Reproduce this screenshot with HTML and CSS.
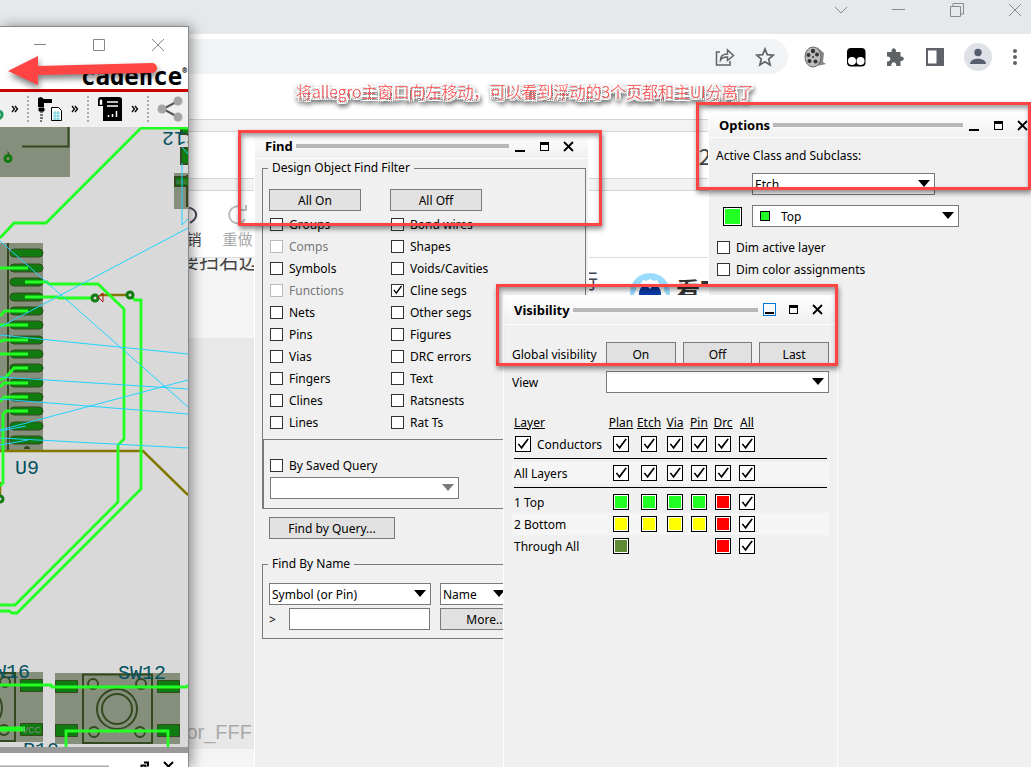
FILE: index.html
```html
<!DOCTYPE html>
<html lang="zh-CN">
<head>
    <meta charset="UTF-8">
    <meta name="viewport" content="width=device-width, initial-scale=1.0">
    <title>Allegro</title>
    <link rel="stylesheet" href="styles.css">
</head>
<body>
    <div class="desktop">
        <!-- browser behind everything -->
        <div class="browser">
            <div class="tab-strip">
                <svg width="14" height="14" viewBox="0 0 14 14"><path d="M1 4l6 6 6-6"/></svg>
                <svg width="14" height="14" viewBox="0 0 14 14"><path d="M0 6.500h13"/></svg>
                <svg width="14" height="14" viewBox="0 0 14 14"><path d="M.5 3.500h10v10H.5zM3 3V.5h10.500v10.500H11"/></svg>
                <svg width="14" height="14" viewBox="0 0 14 14"><path d="M1 1l12 12M13 1L1 13"/></svg>
            </div>
            <div class="address-row">
                <div class="address">
                    <svg width="20" height="20" viewBox="0 0 20 20" fill="none" stroke="#5f6368" stroke-width="1.5"><path d="M5 5H1.500v13H15v-4M5.500 13c0-4 3-6 7-6V3l6 5.500-6 5V10c-3 0-5.500.5-7 3z"/></svg>
                    <svg width="20" height="20" viewBox="0 0 20 20" fill="none" stroke="#5f6368" stroke-width="1.700"><path d="M10 2l2.300 5.600 6 .5-4.600 3.900 1.400 5.900-5.100-3.200-5.100 3.200 1.400-5.900L1.700 8.100l6-.5z"/></svg>
                </div>
                <div class="extensions">
                    <svg width="22" height="22" viewBox="0 0 22 22"><path d="M13 1l7 6-1 9 3 2-4 1-6 1z" fill="#888"/><ellipse cx="9" cy="11" rx="8" ry="10" fill="#bbb" stroke="#666"/><g fill="#333"><circle cx="9" cy="5" r="2.200"/><circle cx="4.500" cy="9" r="2"/><circle cx="13" cy="8.500" r="2"/><circle cx="5.500" cy="15" r="2"/><circle cx="11.500" cy="15.500" r="2"/><circle cx="9" cy="11" r="1"/></g></svg>
                    <svg width="20" height="20" viewBox="0 0 20 20"><rect x="1" y="1" width="18.500" height="18.500" rx="4"/><circle cx="6" cy="14" r="4" fill="#fff"/><circle cx="14.500" cy="14" r="4" fill="#fff"/></svg>
                    <svg width="20" height="20" viewBox="0 0 20 20"><path fill="#5f6368" d="M2 5h4.500C6 0 11.500 0 11 5h4.500v4.500c4.500-.5 4.500 5 0 4.500V19h-4.200c.2-5-5.300-5-5.100 0H2v-4.500c4.500.5 4.500-5.500 0-5z"/></svg>
                    <svg width="20" height="20" viewBox="0 0 20 20"><path fill="#5f6368" fill-rule="evenodd" d="M1 1h18v18H1zm2 2.500v13h8.500v-13z"/></svg>
                    <svg width="28" height="28" viewBox="0 0 28 28"><circle cx="14" cy="14" r="14" fill="#dee1e6"/><circle cx="14" cy="9.500" r="3.700" fill="#565e70"/><path d="M6 21c0-7 16-7 16 0z" fill="#565e70"/></svg>
                    <svg width="6" height="20" viewBox="0 0 6 20" fill="#5f6368"><circle cx="3" cy="4" r="2"/><circle cx="3" cy="10" r="2"/><circle cx="3" cy="16" r="2"/></svg>
                </div>
            </div>
            <div class="bookmarks"></div>
            <div class="band"></div>
            <div class="band-row"><span class="page-number">2</span></div>
            <div class="band"></div>
            <div class="ribbon">
                <div class="ribbon-item">
                    <svg width="22" height="22" viewBox="0 0 22 22" fill="none" stroke="#4b4b5a" stroke-width="2"><path d="M4 3v6h6M5 7c8-8 24 4 9 13"/></svg>
                    撤销
                </div>
                <div class="ribbon-item faded">
                    <svg width="22" height="22" viewBox="0 0 22 22" fill="none" stroke="#bbb" stroke-width="2"><path d="M14 4a8.500 8.500 0 1 0 4 12M19 2v5h-6"/></svg>
                    重做
                </div>
            </div>
            <div class="document">
                <div class="doc-left">
                    <p class="doc-heading">要扫右边</p>
                    <div class="doc-gray"><span>or_FFF</span></div>
                    <div class="doc-foot"></div>
                </div>
                <div class="doc-mid">
                    <span class="doc-char">行</span>
                    <svg width="42" height="42" viewBox="0 0 42 42"><circle cx="21" cy="21" r="20" fill="#9adcff"/><path d="M5 22q3-4 2-8 5-1 7-6 4 2 7-1 4 3 7 1 2 5 7 6-1 4 2 8v15H5z" fill="#fff"/><path d="M10 22c0-9 8-10 11-5 3-5 11-4 11 5 0 8-22 8-22 0z" fill="#0b3aa5"/></svg>
                    <span class="doc-title">看飞</span>
                </div>
            </div>
        </div>

        <!-- main allegro window -->
        <div class="main-window">
            <div class="main-title">
                <svg width="14" height="14" viewBox="0 0 14 14"><path d="M1 6.500h12"/></svg>
                <svg width="14" height="14" viewBox="0 0 14 14"><path d="M1.500 1.500h11v11h-11z"/></svg>
                <svg width="14" height="14" viewBox="0 0 14 14"><path d="M1 1l12 12M13 1L1 13"/></svg>
            </div>
            <div class="logo">cadence<sup>®</sup></div>
            <div class="main-toolbar">
                <svg width="188" height="34" viewBox="0 92 188 34">
                    <path d="M0 111c3 2 3 7-2 8" stroke="#1d9b5e" stroke-width="3" fill="none"/>
                    <path d="M28 96v26M88 96v26M148 96v26" stroke="#aaa" stroke-width="2" stroke-dasharray="2 2"/>
                    <path d="M12 106l2.500 3-2.500 3M15 106l2.500 3-2.500 3M72 106l2.500 3-2.500 3M75 106l2.500 3-2.500 3M132 106l2.500 3-2.500 3M135 106l2.500 3-2.500 3" fill="none" stroke="#000" stroke-width="1.300"/>
                    <path d="M38 98l3-1 3 2h8v4h-8v4h-6z"/>
                    <path d="M39 108h5v3h-5zM40 112h3M40 115h3M40 118h3M41 120v2" stroke="#000"/>
                    <path d="M51.500 107.500h7l3 3v10h-10z" fill="#fff" stroke="#000"/>
                    <path d="M53 113h7M53 116h7M53 119h7M55 111v9M58 111v9" stroke="#67cfd8"/>
                    <path d="M98 106v-6q0-3 3-3h18q3 0 3 3v21h-19v-15z"/>
                    <path d="M100.500 104v-3q.5-2 1 0v3zM107 102h11M107 106h11M108.500 117v-2M112.500 117v-3M116.500 117v-6" stroke="#fff" stroke-width="1.500" fill="#fff"/>
                    <path d="M178 101l-15 8 15 8" fill="none" stroke="#555" stroke-width="2"/>
                    <g fill="#a5a5a5"><circle cx="178" cy="101" r="4.500"/><circle cx="162" cy="109" r="4.500"/><circle cx="178" cy="117" r="4.500"/></g>
                </svg>
            </div>
            <svg class="board" viewBox="0 127 188 620" preserveAspectRatio="xMinYMin slice">
                <defs>
                    <g id="pad"><rect x="10" y="-4" width="33" height="8" rx="4" fill="#107c10" stroke="#33491f"/></g>
                </defs>
                <!-- component bodies -->
                <g fill="#868f7b">
                    <path d="M0 127h70v50H0zM0 243h43v209H0zM174 173h14v36h-14z"/>
                    <path d="M0 672h43v70H0zM55 673h125v71H55z"/>
                </g>
                <path d="M22 146.500h46.500V127M8 243v209M187 175v32" fill="none" stroke="#33491f" stroke-width="2"/>
                <circle cx="8" cy="158.500" r="3" fill="none" stroke="#107c10" stroke-width="3"/>
                <path d="M7 152q2-1 2 3" fill="none" stroke="#33491f"/>
                <use href="#pad" y="253"/><use href="#pad" y="268"/><use href="#pad" y="282"/><use href="#pad" y="297"/>
                <use href="#pad" y="311"/><use href="#pad" y="325"/><use href="#pad" y="340"/><use href="#pad" y="354"/>
                <use href="#pad" y="368"/><use href="#pad" y="383"/><use href="#pad" y="397"/><use href="#pad" y="411"/>
                <use href="#pad" y="426"/><use href="#pad" y="440"/>
                <path d="M24 449a3 3 0 0 1 6 0z" fill="#33491f"/>
                <g fill="#107c10" stroke="#33491f" stroke-width="2">
                    <rect x="181" y="124" width="12" height="10"/>
                    <rect x="181" y="148" width="12" height="16"/>
                    <rect x="175" y="177" width="16" height="9"/>
                </g>
                <text x="176" y="184" class="net">GND</text>
                <!-- switches -->
                <g fill="#107c10" stroke="#33491f">
                    <path d="M20.500 679.500h22v12h-22zM20.500 723.500h22v12h-22zM55.500 680.500h22v12h-22zM157.500 680.500h22v12h-22zM55.500 724.500h22v12h-22zM157.500 724.500h22v12h-22z"/>
                </g>
                <g fill="none" stroke="#33491f" stroke-width="2">
                    <path d="M83 674.500h69V743H83zM0 673h15v68H0"/>
                    <circle cx="117" cy="709" r="20"/><circle cx="117" cy="709" r="15"/><circle cx="-18" cy="708" r="20"/>
                    <circle cx="93" cy="684" r="5"/><circle cx="141" cy="684" r="5"/><circle cx="94" cy="732" r="5"/><circle cx="140" cy="732" r="5"/>
                    <circle cx="5" cy="682" r="5"/><circle cx="4" cy="730" r="5"/>
                </g>
                <path d="M0 451h143l45 44M100 295h28M0 482v16" fill="none" stroke="#827800" stroke-width="2.500"/>
                <!-- routed traces -->
                <g fill="none" stroke="#22ff22" stroke-width="2.800">
                    <path d="M188 128h-47l-95 95H14L0 238"/>
                    <path d="M0 268h28M25 282h22l2 2h49l26 25v130l-6 6v57L15 605H0"/>
                    <path d="M25 297h32l2 1h34M130 295l5 5h6v189L17 613h-5l-3-2H0"/>
                    <path d="M0 316l5-5h23M0 325h28M0 342l3-2h25M0 354h28M0 380l6-3 8-9h14M0 387l4-4h24M0 402l4-5h24M28 411H6l-3 3v69L0 486"/>
                    <path d="M0 685h51l1 2h134l2-2M66 747v-16h102v16"/>
                    <path d="M0 729h25" stroke-width="5"/>
                </g>
                <!-- ratsnest -->
                <g fill="none" stroke="#22d3ff">
                    <path d="M0 241l188 166M0 327l188-99M0 335l188 19M0 377l188 12M0 430l188-50M0 399l188 15M0 438l188 10M0 431l26-5M0 445l28-5M182 163v62l6-6M182 147l6 7"/>
                </g>
                <g fill="#d9d9d9" stroke="#107c10" stroke-width="3"><circle cx="95" cy="298" r="3"/><circle cx="130" cy="295" r="3"/><circle cx="0" cy="499" r="3"/></g>
                <path d="M103 293v9l-5-5z" fill="none" stroke="#b01010"/>
                <text x="15" y="474" class="refdes">U9</text>
                <text x="118" y="679" class="refdes">SW12</text>
                <text x="-18" y="678" class="refdes">SW16</text>
                <text x="23" y="756" class="refdes">R10</text>
                <text x="174" y="146" class="refdes" transform="rotate(180 186 139)">C12</text>
                <text x="22" y="733" class="net-large">VCC</text>
            </svg>
            <div class="dock-title">
                <svg width="188" height="14" viewBox="0 753 188 14"><path d="M0 766.500h109" stroke="#aaa" stroke-width="2"/><path d="M144 762.500h4v4M141.500 765.500h4v3h-4z" fill="none" stroke="#000" stroke-width="2"/><path d="M164 762l9 9M173 762l-9 9" stroke="#000" stroke-width="2"/></svg>
            </div>
        </div>

        <!-- Find -->
        <section class="panel find">
            <header class="panel-title">
                <h2>Find</h2><i class="grip"></i>
                <button type="button" aria-label="Minimize"><svg width="11" height="11" viewBox="0 0 11 11"><path d="M0 9h10v2H0z"/></svg></button>
                <button type="button" aria-label="Maximize"><svg width="11" height="11" viewBox="0 0 11 11"><path fill-rule="evenodd" d="M1 1h9v9H1zm1 3v5h7V4z"/></svg></button>
                <button type="button" aria-label="Close"><svg width="11" height="11" viewBox="0 0 11 11"><path d="M1 1l9 9M10 1L1 10" stroke="#000" stroke-width="1.800"/></svg></button>
            </header>
            <fieldset class="filter">
                <legend>Design Object Find Filter</legend>
                <div class="filter-grid">
                    <button type="button" class="btn">All On</button>
                    <button type="button" class="btn">All Off</button>
                    <label><input type="checkbox">Groups</label>
                    <label><input type="checkbox">Bond wires</label>
                    <label><input type="checkbox" disabled>Comps</label>
                    <label><input type="checkbox">Shapes</label>
                    <label><input type="checkbox">Symbols</label>
                    <label><input type="checkbox">Voids/Cavities</label>
                    <label><input type="checkbox" disabled>Functions</label>
                    <label><input type="checkbox" checked>Cline segs</label>
                    <label><input type="checkbox">Nets</label>
                    <label><input type="checkbox">Other segs</label>
                    <label><input type="checkbox">Pins</label>
                    <label><input type="checkbox">Figures</label>
                    <label><input type="checkbox">Vias</label>
                    <label><input type="checkbox">DRC errors</label>
                    <label><input type="checkbox">Fingers</label>
                    <label><input type="checkbox">Text</label>
                    <label><input type="checkbox">Clines</label>
                    <label><input type="checkbox">Ratsnests</label>
                    <label><input type="checkbox">Lines</label>
                    <label><input type="checkbox">Rat Ts</label>
                </div>
                <div class="saved-query">
                    <label><input type="checkbox">By Saved Query</label>
                    <div class="select off"><select aria-label="Saved query" disabled><option></option></select></div>
                </div>
            </fieldset>
            <button type="button" class="btn query-btn">Find by Query...</button>
            <fieldset class="by-name">
                <legend>Find By Name</legend>
                <div class="name-grid">
                    <div class="select"><select aria-label="Object type"><option>Symbol (or Pin)</option></select></div>
                    <div class="select"><select aria-label="Match by"><option>Name</option></select></div>
                    <label class="name-input">&gt;<input type="text"></label>
                    <button type="button" class="btn">More...</button>
                </div>
            </fieldset>
        </section>

        <!-- Options -->
        <section class="panel options">
            <header class="panel-title">
                <h2>Options</h2><i class="grip"></i>
                <button type="button" aria-label="Minimize"><svg width="11" height="11" viewBox="0 0 11 11"><path d="M0 9h10v2H0z"/></svg></button>
                <button type="button" aria-label="Maximize"><svg width="11" height="11" viewBox="0 0 11 11"><path fill-rule="evenodd" d="M1 1h9v9H1zm1 3v5h7V4z"/></svg></button>
                <button type="button" aria-label="Close"><svg width="11" height="11" viewBox="0 0 11 11"><path d="M1 1l9 9M10 1L1 10" stroke="#000" stroke-width="1.800"/></svg></button>
            </header>
            <div class="options-body">
                <label for="class-select">Active Class and Subclass:</label>
                <div class="select class-select"><select id="class-select"><option>Etch</option></select></div>
                <div class="subclass">
                    <button type="button" class="swatch big green" aria-label="Top color"></button>
                    <div class="select"><i class="mini"></i><select aria-label="Subclass"><option>Top</option></select></div>
                </div>
                <label><input type="checkbox">Dim active layer</label>
                <label><input type="checkbox">Dim color assignments</label>
            </div>
        </section>

        <!-- Visibility -->
        <section class="panel visibility">
            <header class="panel-title">
                <h2>Visibility</h2><i class="grip"></i>
                <button type="button" class="hot" aria-label="Minimize"><svg width="11" height="11" viewBox="0 0 11 11"><path d="M1 8h9v2H1z"/></svg></button>
                <button type="button" aria-label="Maximize"><svg width="11" height="11" viewBox="0 0 11 11"><path fill-rule="evenodd" d="M1 1h9v9H1zm1 3v5h7V4z"/></svg></button>
                <button type="button" aria-label="Close"><svg width="11" height="11" viewBox="0 0 11 11"><path d="M1 1l9 9M10 1L1 10" stroke="#000" stroke-width="1.800"/></svg></button>
            </header>
            <div class="visibility-body">
                <div class="vis-row">
                    <span>Global visibility</span>
                    <div class="vis-buttons">
                        <button type="button" class="btn">On</button>
                        <button type="button" class="btn">Off</button>
                        <button type="button" class="btn">Last</button>
                    </div>
                </div>
                <div class="vis-row">
                    <label for="view-select">View</label>
                    <div class="select"><select id="view-select"><option></option></select></div>
                </div>
                <table class="layers">
                    <colgroup><col class="c-name"><col class="c-wide"><col class="c-wide"><col class="c-slim"><col class="c-slim"><col class="c-slim"><col class="c-slim"><col></colgroup>
                    <tr><th>Layer</th><th>Plan</th><th>Etch</th><th>Via</th><th>Pin</th><th>Drc</th><th>All</th><th></th></tr>
                    <tr>
                        <td><label><input type="checkbox" checked>Conductors</label></td>
                        <td><input type="checkbox" aria-label="Conductors Plan" checked></td>
                        <td><input type="checkbox" aria-label="Conductors Etch" checked></td>
                        <td><input type="checkbox" aria-label="Conductors Via" checked></td>
                        <td><input type="checkbox" aria-label="Conductors Pin" checked></td>
                        <td><input type="checkbox" aria-label="Conductors Drc" checked></td>
                        <td><input type="checkbox" aria-label="Conductors All" checked></td>
                        <td></td>
                    </tr>
                    <tr class="rule"><td colspan="8"><hr></td></tr>
                    <tr class="alt">
                        <td>All Layers</td>
                        <td><input type="checkbox" aria-label="All Layers Plan" checked></td>
                        <td><input type="checkbox" aria-label="All Layers Etch" checked></td>
                        <td><input type="checkbox" aria-label="All Layers Via" checked></td>
                        <td><input type="checkbox" aria-label="All Layers Pin" checked></td>
                        <td><input type="checkbox" aria-label="All Layers Drc" checked></td>
                        <td><input type="checkbox" aria-label="All Layers All" checked></td>
                        <td></td>
                    </tr>
                    <tr class="rule"><td colspan="8"><hr></td></tr>
                    <tr>
                        <td>1 Top</td>
                        <td><button type="button" class="swatch green" aria-label="Top Plan"></button></td>
                        <td><button type="button" class="swatch green" aria-label="Top Etch"></button></td>
                        <td><button type="button" class="swatch green" aria-label="Top Via"></button></td>
                        <td><button type="button" class="swatch green" aria-label="Top Pin"></button></td>
                        <td><button type="button" class="swatch red" aria-label="Top Drc"></button></td>
                        <td><input type="checkbox" aria-label="Top All" checked></td>
                        <td></td>
                    </tr>
                    <tr class="alt">
                        <td>2 Bottom</td>
                        <td><button type="button" class="swatch yellow" aria-label="Bottom Plan"></button></td>
                        <td><button type="button" class="swatch yellow" aria-label="Bottom Etch"></button></td>
                        <td><button type="button" class="swatch yellow" aria-label="Bottom Via"></button></td>
                        <td><button type="button" class="swatch yellow" aria-label="Bottom Pin"></button></td>
                        <td><button type="button" class="swatch red" aria-label="Bottom Drc"></button></td>
                        <td><input type="checkbox" aria-label="Bottom All" checked></td>
                        <td></td>
                    </tr>
                    <tr>
                        <td>Through All</td>
                        <td><button type="button" class="swatch olive" aria-label="Through Plan"></button></td>
                        <td></td><td></td><td></td>
                        <td><button type="button" class="swatch red" aria-label="Through Drc"></button></td>
                        <td><input type="checkbox" aria-label="Through All" checked></td>
                        <td></td>
                    </tr>
                </table>
            </div>
        </section>

        <!-- annotations -->
        <p class="note">将allegro主窗口向左移动，可以看到浮动的3个页都和主UI分离了</p>
        <div class="frame frame-find"></div>
        <div class="frame frame-options"></div>
        <div class="frame frame-visibility"></div>
        <svg class="arrow" width="170" height="50" viewBox="0 50 170 50"><path fill="#ff4444" d="M8 71l30-15v10l114-3a5 5 0 0 1 0 10L38 75v10z"/></svg>
    </div>
</body>
</html>
```
FILE: styles.css
```css
* {
    box-sizing: border-box;
}
body {
    margin: 0;
    font-family: "Noto Sans", "Open Sans", "Noto Sans CJK SC", sans-serif;
    font-size: 12px;
    color: #000;
}
button, input, select {
    font: inherit;
    color: inherit;
    margin: 0;
}
.desktop {
    position: relative;
    height: 100vh;
    overflow: hidden;
    background: #fff;
}

/* browser */
.browser {
    display: flex;
    flex-direction: column;
    height: 100%;
    font-family: "Noto Sans CJK SC", sans-serif;
}
.tab-strip {
    height: 34px;
    flex: none;
    display: flex;
    justify-content: flex-end;
    gap: 44px;
    padding: 3px 9px 0 0;
    background: #e5e9ec;
}
.tab-strip svg, .main-title svg {
    fill: none;
    stroke: #888;
}
.address-row {
    height: 45px;
    flex: none;
    display: flex;
    align-items: center;
}
.address {
    flex: 1;
    height: 35px;
    display: flex;
    align-items: center;
    justify-content: flex-end;
    gap: 20px;
    padding-right: 13px;
    background: #f1f3f4;
    border-radius: 0 18px 18px 0;
}
.extensions {
    display: flex;
    align-items: center;
    justify-content: space-between;
    width: 243px;
    padding: 0 13px 0 16px;
}
.bookmarks {
    height: 40px;
    flex: none;
}
.band {
    height: 13px;
    flex: none;
    background: #f3f3f3;
    border: 1px solid #d4d4d4;
}
.band-row {
    height: 46px;
    flex: none;
    display: flex;
    justify-content: flex-end;
    align-items: center;
    padding-right: 320px;
}
.page-number {
    font-size: 22px;
    color: #444;
}
.ribbon {
    height: 67px;
    flex: none;
    display: flex;
    gap: 20px;
    padding: 12px 0 0 171px;
    font-size: 15px;
    line-height: 28px;
    border-bottom: 1px solid #ddd;
}
.ribbon-item {
    width: 31px;
    display: flex;
    flex-direction: column;
    align-items: center;
    color: #444;
    white-space: nowrap;
}
.faded {
    color: #aaa;
}
.document {
    flex: 1;
    display: flex;
}
.doc-left {
    width: 254px;
    display: flex;
    flex-direction: column;
    background: #f5f5f5;
}
.doc-heading {
    height: 80px;
    margin: 0;
    padding-left: 179px;
    font-size: 20px;
    line-height: 6px;
    color: #444;
    overflow: hidden;
    white-space: nowrap;
}
.doc-gray {
    flex: 1;
    display: flex;
    align-items: flex-end;
    justify-content: flex-end;
    padding: 0 2px 5px;
    background: #e8e8e8;
    font-family: "Liberation Sans", Arial, sans-serif;
    font-size: 20px;
    color: #aaa;
}
.doc-foot {
    height: 18px;
}
.doc-mid {
    flex: 1;
    display: flex;
    align-items: flex-start;
    padding: 14px 0 0 324px;
}
.doc-char {
    font-size: 20px;
    line-height: 18px;
    padding-right: 31px;
    color: #445;
}
.doc-title {
    padding-left: 5px;
    font-size: 24px;
    font-weight: bold;
    color: #333;
}

/* main window */
.main-window {
    position: absolute;
    left: 0;
    top: 26px;
    bottom: 0;
    width: 189px;
    display: flex;
    flex-direction: column;
    background: #fff;
    border-top: 1px solid #888;
    border-right: 1px solid #888;
    box-shadow: 3px 0 12px rgba(0,0,0,0.4);
    overflow: hidden;
}
.main-title {
    display: flex;
    justify-content: flex-end;
    gap: 45px;
    padding: 11px 23px 0 0;
    height: 36px;
}
.logo {
    display: flex;
    justify-content: flex-end;
    height: 29px;
    padding-right: 1px;
    font-family: "DejaVu Sans Mono", monospace;
    font-size: 24px;
    font-weight: bold;
    line-height: 28px;
    border-bottom: 3px solid #cc0000;
}
.logo sup {
    font-size: 8px;
    line-height: 16px;
}
.main-toolbar {
    height: 35px;
    background: #f0f0f0;
}
.board {
    display: block;
    width: 100%;
    flex: 1;
    min-height: 0;
    background: #d9d9d9;
}
.refdes {
    font-family: "Liberation Mono", monospace;
    font-size: 20px;
    fill: #045260;
}
.net {
    font-family: "Liberation Mono", monospace;
    font-size: 6px;
    fill: #777;
}
.net-large {
    font-family: "Liberation Sans", Arial, sans-serif;
    font-size: 9px;
    fill: #888;
}
.dock-title {
    height: 20px;
    border-top: 6px solid #999;
}
.dock-title svg {
    display: block;
}

/* floating panels */
.panel {
    position: absolute;
    bottom: 0;
    background: #f0f0f0;
    border-left: 1px solid #fff;
    border-right: 1px solid #fff;
}
.find {
    left: 254px;
    top: 134px;
    width: 335px;
}
.options {
    left: 708px;
    right: -7px;
    top: 113px;
}
.visibility {
    left: 503px;
    top: 295px;
    width: 335px;
}
.panel-title {
    display: flex;
    align-items: center;
    height: 25px;
    padding: 0 14px 0 10px;
    background: linear-gradient(#fff, #f0f0f0);
    border-bottom: 1px solid #fff;
}
.visibility .panel-title {
    height: 30px;
    padding-right: 13px;
}
.panel-title h2 {
    margin: 0;
    font-size: 13px;
    line-height: 18px;
}
.grip {
    flex: 1;
    height: 4px;
    margin: 0 5px 0 3px;
    background: #b8b8b8;
}
.panel-title button {
    display: flex;
    width: 13px;
    height: 13px;
    padding: 0;
    border: 1px solid transparent;
    background: none;
}
.panel-title button + button {
    margin-left: 11px;
}
.panel-title .hot {
    border-color: #0078d7;
}
label {
    display: flex;
    align-items: center;
    height: 22px;
    white-space: nowrap;
}
input[type="checkbox"] {
    appearance: none;
    flex: none;
    width: 13px;
    height: 13px;
    margin-right: 6px;
    background: #fff;
    border: 1px solid #333;
}
input[type="checkbox"]:disabled {
    border-color: #bbb;
}
label:has(input:disabled) {
    color: #777;
}
input[type="checkbox"]:checked::before {
    content: "";
    display: block;
    height: 100%;
    background: #000;
    clip-path: polygon(12% 52%, 22% 46%, 38% 68%, 82% 10%, 92% 16%, 40% 88%);
}
input[type="text"] {
    width: 141px;
    height: 22px;
    padding: 0 2px;
    background: #fff;
    border: 1px solid #7a7a7a;
}
.btn {
    height: 22px;
    padding: 1px 0 0;
    background: #e1e1e1;
    border: 1px solid #7a7a7a;
}
.select {
    position: relative;
    height: 22px;
}
.select select {
    appearance: none;
    display: block;
    width: 100%;
    height: 22px;
    padding: 0 2px;
    background: #fff;
    border: 1px solid #7a7a7a;
    border-radius: 0;
    opacity: 1;
}
.select::after {
    content: "";
    position: absolute;
    right: 5px;
    top: 7px;
    width: 12px;
    height: 7px;
    background: #000;
    clip-path: polygon(0 0, 100% 0, 50% 100%);
    pointer-events: none;
}
.off::after {
    background: #7a7a7a;
}
fieldset {
    min-width: 0;
    margin: 0 2px 0 7px;
    padding: 0;
    border: 1px solid #7a7a7a;
}
legend {
    margin-left: 5px;
    padding: 0 4px;
    line-height: 18px;
}
.find fieldset {
    width: 324px;
}
.find .panel-title {
    padding-right: 13px;
}
.filter-grid {
    display: grid;
    grid-template-columns: 121px 121px;
    grid-template-rows: 24px;
    padding: 12px 0 0 7px;
}
.filter-grid .btn {
    width: 92px;
    margin-left: -1px;
}
.saved-query {
    height: 69px;
    margin-top: 6px;
    padding: 14px 0 0 6px;
    border-top: 1px solid #7a7a7a;
    border-left: 1px solid #7a7a7a;
}
.saved-query .select {
    width: 189px;
    margin-top: 1px;
}
.query-btn {
    display: block;
    width: 126px;
    margin: 8px 0 16px 14px;
}
.name-grid {
    display: grid;
    grid-template-columns: 162px 70px;
    gap: 3px 9px;
    padding: 10px 0 8px 6px;
}
.name-input {
    justify-content: space-between;
    padding-right: 1px;
}
.name-grid .btn {
    width: 92px;
}

.options .panel-title {
    padding-right: 8px;
}
.options-body {
    padding: 6px 7px;
}
.options-body > label:has(input) {
    padding-left: 1px;
}
.class-select {
    width: 183px;
    margin: 7px 0 10px 36px;
}
.subclass {
    display: flex;
    align-items: center;
    gap: 10px;
    padding-left: 7px;
    margin-bottom: 9px;
}
.subclass .select {
    width: 207px;
}
.subclass select {
    padding-left: 28px;
}
.mini {
    position: absolute;
    left: 8px;
    top: 6px;
    width: 10px;
    height: 10px;
    background: #22ff22;
    border: 1px solid #000;
}
.swatch {
    display: block;
    width: 16px;
    height: 16px;
    padding: 1px;
    border: 1px solid #000;
    background-color: #fff;
    background-clip: content-box;
    box-shadow: inset 0 0 0 1px #fff;
}
.big {
    width: 19px;
    height: 19px;
}
.green {
    background-color: #22ff22;
}
.yellow {
    background-color: #ffff00;
}
.red {
    background-color: #ff0000;
}
.olive {
    background-color: #5e8a36;
}

.visibility-body {
    padding: 17px 8px 0;
}
.vis-row {
    display: grid;
    grid-template-columns: 94px 223px;
    align-items: center;
    margin-bottom: 5px;
    white-space: nowrap;
}
.vis-buttons {
    display: grid;
    grid-template-columns: 1fr 1fr 1fr;
    gap: 7px;
}
.vis-buttons .btn {
    height: 24px;
    padding: 0;
}
.layers {
    width: 317px;
    margin-top: 18px;
    table-layout: fixed;
    border-collapse: collapse;
}
.c-name {
    width: 95px;
}
.c-wide {
    width: 28px;
}
.c-slim {
    width: 24px;
}
.layers th {
    height: 22px;
    padding: 0;
    font-weight: normal;
    text-decoration: underline;
}
.layers td {
    height: 22px;
    padding: 0;
    white-space: nowrap;
}
.layers th:first-child, .layers td:first-child {
    padding-left: 2px;
    text-align: left;
}
.layers input[type="checkbox"] {
    display: block;
    width: 16px;
    height: 16px;
    margin: 0 auto;
    border: 1px solid #000;
}
.layers label input[type="checkbox"] {
    margin: 0 6px 0 1px;
}
.layers .swatch {
    margin: 0 auto;
}
.layers .rule td {
    height: 7px;
    padding-right: 2px;
}
.layers hr {
    margin: 3px 0;
    border: 0;
    border-top: 1px solid #000;
}
.alt {
    background: #f5f5f5;
}

/* annotations */
.note {
    position: absolute;
    left: 296px;
    top: 79px;
    margin: 0;
    font-family: "Noto Sans CJK SC", sans-serif;
    font-size: 16px;
    font-weight: 300;
    line-height: 24px;
    white-space: nowrap;
    color: #ff4444;
    text-shadow: 2px 0 #fff, -2px 0 #fff, 0 2px #fff, 0 -2px #fff, 2px 2px #fff, -2px 2px #fff, 2px -2px #fff, -2px -2px #fff;
    filter: drop-shadow(1px 3px 2px rgba(0,0,0,0.6));
}
.frame {
    position: absolute;
    border: 3px solid #ff4444;
    box-shadow: 1px 3px 5px rgba(0,0,0,0.45), inset 1px 3px 5px rgba(0,0,0,0.4);
    pointer-events: none;
}
.frame-find {
    left: 238px;
    top: 130px;
    width: 364px;
    height: 96px;
}
.frame-options {
    left: 696px;
    top: 102px;
    right: 0;
    height: 88px;
}
.frame-visibility {
    left: 496px;
    top: 284px;
    width: 342px;
    height: 82px;
}
.arrow {
    position: absolute;
    left: 0;
    top: 50px;
    filter: drop-shadow(1px 4px 3px rgba(0,0,0,0.5));
}
```
